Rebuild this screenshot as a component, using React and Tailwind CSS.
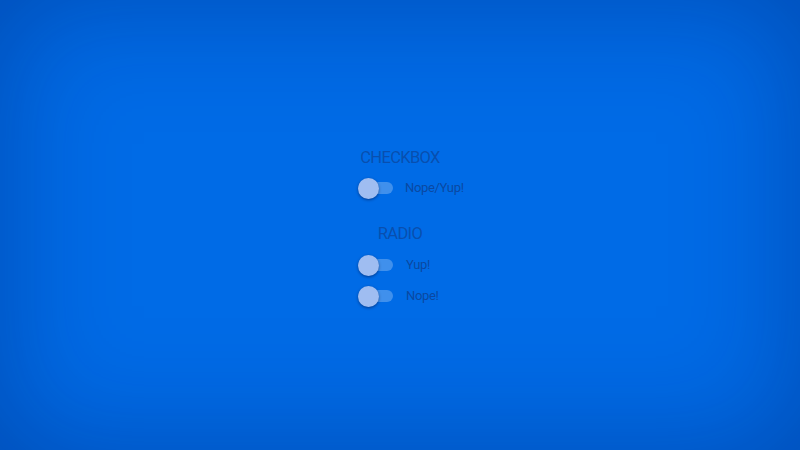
export default function App() {
  return (
    <div
      className="w-[800px] h-[450px] bg-[#006be6] flex flex-col items-center pt-[148px] shadow-[inset_0_0_120px_rgba(0,20,90,0.35)]"
      style={{ fontFamily: "Roboto, 'Liberation Sans', sans-serif" }}
    >
      <div className="w-[84px] flex flex-col">
        <h2 className="text-center text-[16.5px] leading-5 text-[#0d3f8f]/65 tracking-[-0.04em] whitespace-nowrap -mx-10">
          CHECKBOX
        </h2>
        <Toggle label="Nope/Yup!" className="mt-[10px]" />
        <h2 className="mt-[26px] text-center text-[16.5px] leading-5 text-[#0d3f8f]/65 tracking-[-0.04em] whitespace-nowrap -mx-10">
          RADIO
        </h2>
        <Toggle label="Yup!" className="mt-[11px]" />
        <Toggle label="Nope!" className="mt-[11px]" />
      </div>
    </div>
  );
}

function Toggle({ label, className = "" }) {
  return (
    <div className={`flex items-center h-5 whitespace-nowrap ${className}`}>
      <div className="relative w-[36px] h-5 flex items-center">
        <div className="w-[35px] h-3 rounded-full bg-white/25" />
        <div className="absolute left-0 top-0 w-[21px] h-[21px] -mt-[0.5px] rounded-full bg-[#9fbdf1] shadow-[0_1px_3px_rgba(0,0,40,0.45)]" />
      </div>
      <span className="ml-[12px] text-[13px] text-[#0d3f8f]/80 tracking-tight">{label}</span>
    </div>
  );
}
